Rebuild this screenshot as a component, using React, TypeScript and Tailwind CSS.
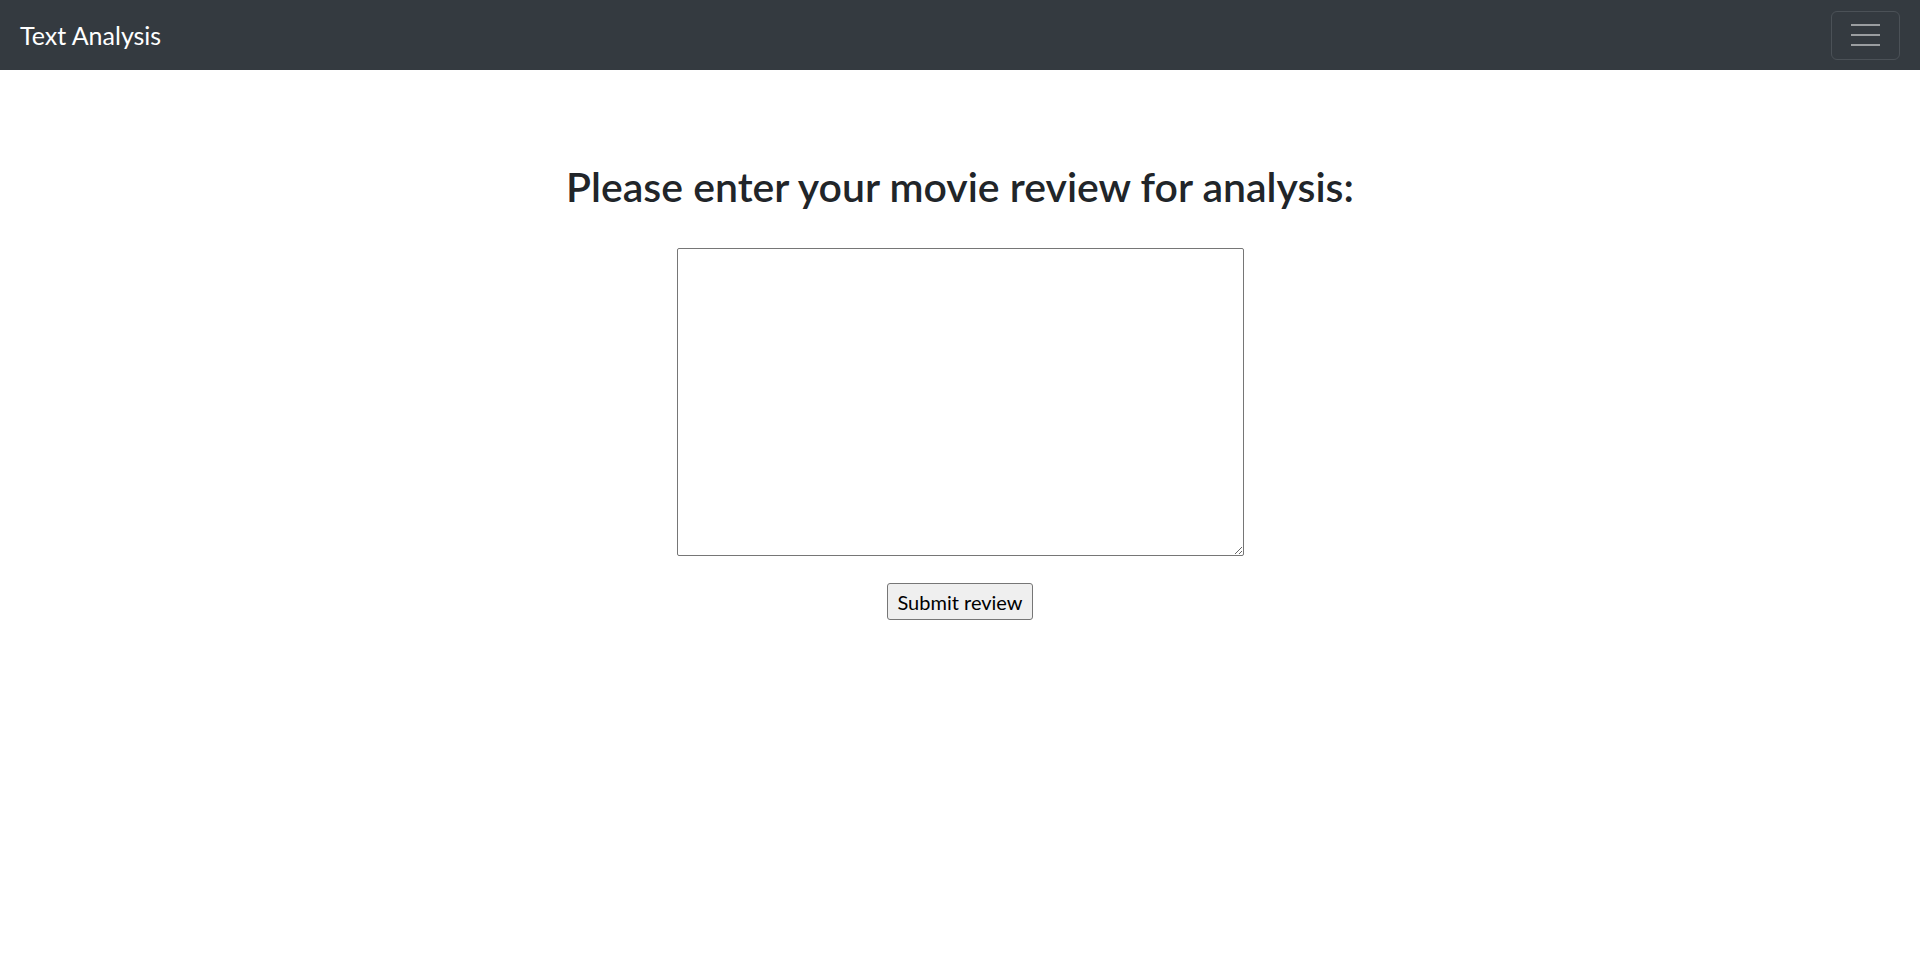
import React from "react";

const App: React.FC = () => {
  return (
    <div className="min-h-screen bg-white font-['Lato',sans-serif] text-[#212529]">
      <nav className="h-[70px] bg-[#343a40] flex items-center justify-between px-5">
        <span className="text-[25px] leading-none text-white">Text Analysis</span>
        <button
          type="button"
          className="w-[69px] h-[49px] rounded-[6px] border border-[#4b5157] flex flex-col items-center justify-center gap-[8px]"
          aria-label="Toggle navigation"
        >
          <span className="block w-[29px] h-[2px] bg-[#9a9da0]" />
          <span className="block w-[29px] h-[2px] bg-[#9a9da0]" />
          <span className="block w-[29px] h-[2px] bg-[#9a9da0]" />
        </button>
      </nav>

      <main className="flex flex-col items-center pt-[93px]">
        <h2 className="text-[41px] leading-[48px] font-semibold">Please enter your movie review for analysis:</h2>
        <textarea className="mt-[37px] w-[567px] h-[308px] border border-[#767676] rounded-[2px] bg-white" />
        <button
          type="button"
          className="mt-[27px] h-[37px] px-[9px] border border-[#767676] rounded-[3px] bg-[#efefef] text-[20px] leading-none text-black"
        >
          Submit review
        </button>
      </main>
    </div>
  );
};

export default App;
